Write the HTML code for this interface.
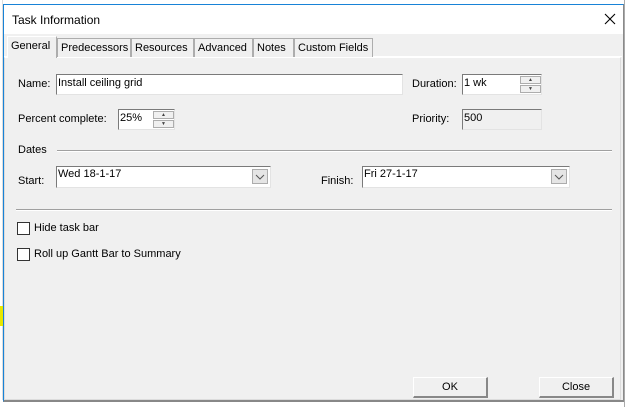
<!DOCTYPE html>
<html><head><style>
*{box-sizing:border-box}
body{margin:0;width:628px;height:407px;position:relative;overflow:hidden;background:#fff;font-family:"Liberation Sans",sans-serif;font-size:11px;color:#000}
.a{position:absolute}
.inp{position:absolute;background:#fff;border:1px solid #7a7a7a;border-right-color:#e3e3e3;border-bottom-color:#e3e3e3;padding:2px 1px;font-size:11px;white-space:nowrap}
.spin{position:absolute;width:21px;height:8px;background:#f0f0f0;border:1px solid #adadad;font-size:5px;text-align:center;line-height:6px;color:#444}
.lbl{position:absolute;font-size:11px}
.tab{position:absolute;top:38px;height:19px;border:1px solid #adadad;border-bottom:none;background:#f0f0f0;padding:3px 3px 0;font-size:11px}
.dd{position:absolute;width:16px;height:15px;top:2px;right:2px;background:#e5e5e5;border:1px solid #acacac}
.cb{position:absolute;width:13px;height:13px;background:#fff;border:1px solid #333}
.btn{position:absolute;width:75px;height:21px;background:#f0f0f0;border:1px solid #fff;border-right:2px solid #888;border-bottom:2px solid #888;text-align:center;line-height:19px;font-size:11px}
</style></head><body>
<div class="a" style="left:0;top:0;width:3px;height:407px;background:#fff;border-right:1px solid #ddd"></div>
<div class="a" style="left:0;top:306px;width:3px;height:20px;background:#e8e800"></div>
<div class="a" style="left:0;top:400px;width:628px;height:7px;background:#fff"></div>
<div class="a" style="left:624px;top:0;width:4px;height:407px;background:#fff;border-left:1px solid #aaa"></div>
<div class="a" style="left:3px;top:4px;width:621px;height:398px;background:#f0f0f0;border:1px solid #8a8a8a;border-top-color:#1883d7;border-left-color:#1883d7;border-bottom:2px solid #888"></div>
<div class="a" style="left:4px;top:5px;width:619px;height:29px;background:#fff"></div>
<div class="lbl" style="left:12px;top:13px;font-size:12px">Task Information</div>
<svg class="a" style="left:604px;top:13px" width="12" height="12"><path d="M1 1L11 11M11 1L1 11" stroke="#000" stroke-width="1.1"/></svg>
<div class="a" style="left:4px;top:56px;width:618px;height:1px;background:#fff"></div>
<div class="a" style="left:4px;top:57px;width:617px;height:343px;border:1px solid #dcdcdc;border-top:1px solid #fff"></div>
<div class="tab" style="left:57px;width:74px">Predecessors</div>
<div class="tab" style="left:131px;width:63px">Resources</div>
<div class="tab" style="left:194px;width:59px">Advanced</div>
<div class="tab" style="left:253px;width:41px">Notes</div>
<div class="tab" style="left:294px;width:79px">Custom Fields</div>
<div class="tab" style="left:7px;top:36px;width:50px;height:22px;border-color:#fff #adadad #fff #fff;padding-top:3px">General</div>
<div class="lbl" style="left:18px;top:78px">Name:</div>
<div class="inp" style="left:56px;top:74px;width:347px;height:21px">Install ceiling grid</div>
<div class="lbl" style="left:412px;top:78px">Duration:</div>
<div class="inp" style="left:462px;top:74px;width:80px;height:21px">1 wk</div>
<div class="spin" style="left:520px;top:76px">▲</div>
<div class="spin" style="left:520px;top:85px">▼</div>
<div class="lbl" style="left:18px;top:113px">Percent complete:</div>
<div class="inp" style="left:118px;top:109px;width:57px;height:21px">25%</div>
<div class="spin" style="left:153px;top:111px">▲</div>
<div class="spin" style="left:153px;top:120px">▼</div>
<div class="lbl" style="left:412px;top:113px">Priority:</div>
<div class="inp" style="left:462px;top:109px;width:80px;height:21px;background:#f0f0f0">500</div>
<div class="lbl" style="left:18px;top:144px">Dates</div>
<div class="a" style="left:57px;top:150px;width:555px;height:2px;border-top:1px solid #a0a0a0;border-bottom:1px solid #fff"></div>
<div class="lbl" style="left:18px;top:175px">Start:</div>
<div class="inp" style="left:56px;top:166px;width:215px;height:22px;padding-top:1px">Wed 18-1-17<div class="dd"><svg width="14" height="13"><path d="M3 5L7 9L11 5" stroke="#555" fill="none"/></svg></div></div>
<div class="lbl" style="left:321px;top:175px">Finish:</div>
<div class="inp" style="left:362px;top:166px;width:208px;height:22px;padding-top:1px">Fri 27-1-17<div class="dd"><svg width="14" height="13"><path d="M3 5L7 9L11 5" stroke="#555" fill="none"/></svg></div></div>
<div class="a" style="left:16px;top:209px;width:596px;height:2px;border-top:1px solid #a0a0a0;border-bottom:1px solid #fff"></div>
<div class="cb" style="left:17px;top:222px"></div>
<div class="lbl" style="left:34px;top:222px">Hide task bar</div>
<div class="cb" style="left:17px;top:248px"></div>
<div class="lbl" style="left:34px;top:248px">Roll up Gantt Bar to Summary</div>
<div class="btn" style="left:413px;top:377px">OK</div>
<div class="btn" style="left:539px;top:377px">Close</div>
</body></html>
